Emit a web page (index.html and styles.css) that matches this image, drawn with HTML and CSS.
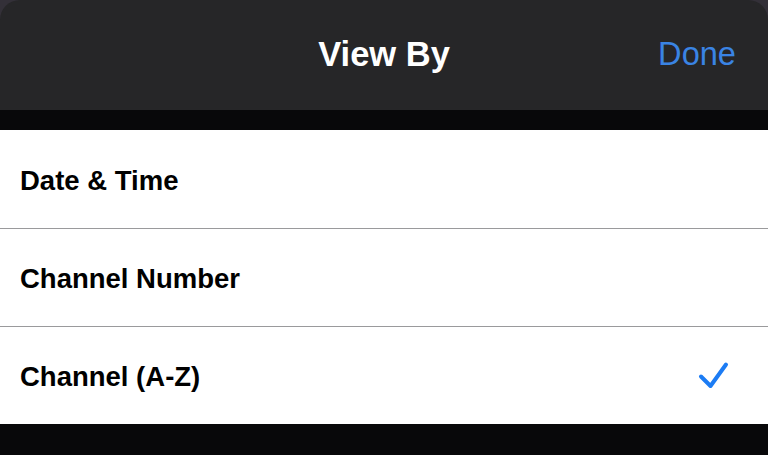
FILE: index.html
```html
<!DOCTYPE html>
<html lang="en">
<head>
<meta charset="utf-8">
<title>View By</title>
<link rel="stylesheet" href="styles.css">
</head>
<body>
<div class="screen">
  <div class="backdrop">
    <header class="navbar">
      <span class="nav-side"></span>
      <h1 class="nav-title">View By</h1>
      <span class="nav-side nav-right"><button class="done-btn">Done</button></span>
    </header>
  </div>
  <div class="gap"></div>
  <ul class="options">
    <li class="option">Date &amp; Time</li>
    <li class="option">Channel Number</li>
    <li class="option">Channel (A-Z)
      <svg class="check" width="32" height="32" viewBox="0 0 32 32" aria-hidden="true">
        <path d="M3 15.5 L12.5 25 L28 3.5" fill="none" stroke="#1c7cf4" stroke-width="4" stroke-linecap="round" stroke-linejoin="round"/>
      </svg>
    </li>
  </ul>
</div>
</body>
</html>
```

FILE: styles.css
```css
html, body {
  margin: 0;
  padding: 0;
}
body {
  background: #08080a;
  font-family: "Liberation Sans", Arial, sans-serif;
  width: 768px;
  height: 455px;
  overflow: hidden;
}
.screen {
  display: flex;
  flex-direction: column;
}
.backdrop {
  background: #333038;
}
.navbar {
  height: 110px;
  background: #262628;
  border-radius: 20px 20px 0 0;
  display: grid;
  grid-template-columns: 1fr auto 1fr;
  align-items: center;
  padding: 0 32px 0 32px;
  box-sizing: border-box;
}
.nav-title {
  margin: 0;
  color: #ffffff;
  font-size: 34.5px;
  font-weight: bold;
  line-height: 1;
  padding-bottom: 2px;
}
.nav-right {
  display: flex;
  justify-content: flex-end;
}
.done-btn {
  background: none;
  border: 0;
  padding: 0;
  margin: 0;
  font-family: inherit;
  font-size: 32.6px;
  color: #3a84e4;
  line-height: 1;
  padding-bottom: 2px;
}
.gap {
  height: 20px;
}
.options {
  list-style: none;
  margin: 0;
  padding: 0;
  background: #ffffff;
}
.option {
  height: 98px;
  box-sizing: border-box;
  display: flex;
  align-items: center;
  justify-content: space-between;
  padding: 3px 38px 0 20px;
  font-size: 27.5px;
  font-weight: bold;
  color: #000000;
}
.option + .option {
  border-top: 1px solid #9a9a9c;
}
.check {
  display: block;
  margin-top: -1px;
}
```
